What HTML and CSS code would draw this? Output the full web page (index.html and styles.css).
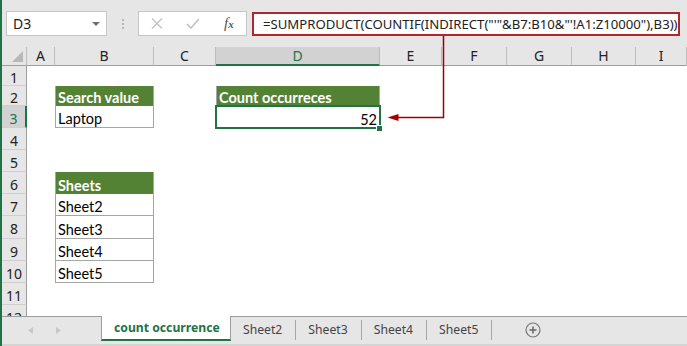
FILE: index.html
```html
<!DOCTYPE html>
<html>
<head>
<meta charset="utf-8">
<link rel="stylesheet" href="styles.css">
</head>
<body>
<div class="app">
  <div class="topbar">
    <div class="namebox"><span>D3</span><svg class="dd" width="8" height="4" viewBox="0 0 8 4"><path d="M0 0H8L4 4Z" fill="#707070"/></svg></div>
    <div class="grip"><i></i><i></i><i></i></div>
    <div class="fxbtns">
      <svg class="ico-x" width="12" height="11" viewBox="0 0 12 11"><path d="M1 0.5L11 10.5M11 0.5L1 10.5" stroke="#c2c2c2" stroke-width="1.4" fill="none"/></svg>
      <svg class="ico-ok" width="14" height="11" viewBox="0 0 14 11"><path d="M1 6L5 10L13 1" stroke="#c2c2c2" stroke-width="1.6" fill="none"/></svg>
      <span class="fx">f<span class="fxx">x</span></span>
    </div>
    <div class="formula">=SUMPRODUCT(COUNTIF(INDIRECT("'"&amp;B7:B10&amp;"'!A1:Z10000"),B3))</div>
  </div>

  <div class="sheet">
    <div class="grid">
      <div class="corner"><span class="tri"></span></div>
      <div class="ch">A</div><div class="ch">B</div><div class="ch">C</div><div class="ch cur">D</div><div class="ch">E</div><div class="ch">F</div><div class="ch">G</div><div class="ch">H</div><div class="ch">I</div>

      <div class="rh">1</div><div></div><div></div><div></div><div></div><div></div><div></div><div></div><div></div><div></div>

      <div class="rh">2</div><div></div><div class="hdr">Search value</div><div></div><div class="hdr">Count occurreces</div><div></div><div></div><div></div><div></div><div></div>

      <div class="rh cur">3</div><div></div><div class="bx">Laptop</div><div></div><div class="sel">52<span class="handle"></span></div><div></div><div></div><div></div><div></div><div></div>

      <div class="rh">4</div><div></div><div></div><div></div><div></div><div></div><div></div><div></div><div></div><div></div>

      <div class="rh">5</div><div></div><div></div><div></div><div></div><div></div><div></div><div></div><div></div><div></div>

      <div class="rh">6</div><div></div><div class="hdr">Sheets</div><div></div><div></div><div></div><div></div><div></div><div></div><div></div>

      <div class="rh">7</div><div></div><div class="bx">Sheet2</div><div></div><div></div><div></div><div></div><div></div><div></div><div></div>

      <div class="rh">8</div><div></div><div class="bx">Sheet3</div><div></div><div></div><div></div><div></div><div></div><div></div><div></div>

      <div class="rh">9</div><div></div><div class="bx">Sheet4</div><div></div><div></div><div></div><div></div><div></div><div></div><div></div>

      <div class="rh">10</div><div></div><div class="bx">Sheet5</div><div></div><div></div><div></div><div></div><div></div><div></div><div></div>

      <div class="rh">11</div><div></div><div></div><div></div><div></div><div></div><div></div><div></div><div></div><div></div>

      <div class="rh">12</div><div></div><div></div><div></div><div></div><div></div><div></div><div></div><div></div><div></div>
    </div>
  </div>

  <div class="tabs">
    <div class="nav">
      <svg width="5" height="7" viewBox="0 0 5 7"><path d="M5 0V7L0 3.5Z" fill="#c8c8c8"/></svg>
      <svg width="5" height="7" viewBox="0 0 5 7"><path d="M0 0V7L5 3.5Z" fill="#c8c8c8"/></svg>
    </div>
    <div class="tab active">count occurrence</div>
    <div class="tab">Sheet2</div>
    <div class="tab">Sheet3</div>
    <div class="tab">Sheet4</div>
    <div class="tab">Sheet5</div>
    <div class="add"><svg width="16" height="16" viewBox="0 0 16 16"><circle cx="8" cy="8" r="7" fill="none" stroke="#777" stroke-width="1.2"/><path d="M8 4.5V11.5M4.5 8H11.5" stroke="#666" stroke-width="1.5"/></svg></div>
  </div>

  <svg class="arrow" width="687" height="346" viewBox="0 0 687 346">
    <path d="M443.5 36V117.5H397" fill="none" stroke="#a00000" stroke-width="1.5"/>
    <path d="M387.5 117.5L398.5 114V121Z" fill="#a00000"/>
  </svg>
</div>
</body>
</html>
```

FILE: styles.css
```css
html, body {
  margin: 0;
  padding: 0;
  background: #ffffff;
}

.app {
  position: relative;
  width: 687px;
  height: 346px;
  box-sizing: border-box;
  border-left: 2px solid #217346;
  display: flex;
  flex-direction: column;
  overflow: hidden;
  font-family: "Noto Sans", "DejaVu Sans", sans-serif;
  color: #333;
}

/* ---------- formula bar ---------- */
.topbar {
  height: 47px;
  flex: none;
  box-sizing: border-box;
  padding: 11px 0 0 4px;
  background: #e6e6e6;
  display: flex;
  align-items: flex-start;
}

.namebox {
  width: 101px;
  height: 25px;
  box-sizing: border-box;
  border: 1px solid #c6c6c6;
  background: #fff;
  display: flex;
  align-items: center;
  justify-content: space-between;
  padding: 0 6px 0 6px;
  font-size: 14px;
  color: #222;
}

.grip {
  width: 31px;
  display: flex;
  flex-direction: column;
  align-items: center;
  gap: 2px;
  padding-top: 8px;
}

.grip i {
  display: block;
  width: 2px;
  height: 2px;
  background: #b4b4b4;
}

.fxbtns {
  width: 109px;
  height: 25px;
  box-sizing: border-box;
  border: 1px solid #c6c6c6;
  background: #fff;
  display: flex;
  align-items: center;
  padding-left: 12px;
  margin-right: 5px;
}

.ico-x { margin-right: 23px; }
.ico-ok { margin-right: 24px; }

.fx {
  font-family: "Liberation Serif", serif;
  font-style: italic;
  font-size: 15px;
  color: #555;
}

.fxx {
  font-size: 11px;
  font-weight: bold;
}

.formula {
  width: 428px;
  height: 24px;
  margin-top: 1px;
  box-sizing: border-box;
  border: 2px solid #b0282c;
  background: #fff;
  padding-left: 9px;
  font-size: 13.15px;
  line-height: 20px;
  color: #222;
  white-space: nowrap;
  overflow: hidden;
}

/* ---------- sheet ---------- */
.sheet {
  flex: 1;
  overflow: hidden;
  background: #fff;
}

.grid {
  display: grid;
  grid-template-columns: 25px 28px 99px 62px 164px 62px 65px 65px 64px 1fr;
  grid-template-rows: 19px 20px 20px 22px 22px 22px 22px 22px 23px 22px 22px 22px 22px;
}

.corner {
  background: #e6e6e6;
  border-right: 1px solid #bcbcbc;
  border-bottom: 1px solid #9e9e9e;
  box-sizing: border-box;
  position: relative;
}

.corner .tri {
  position: absolute;
  right: 3px;
  bottom: 3px;
  width: 0;
  height: 0;
  border-left: 11px solid transparent;
  border-bottom: 11px solid #b8b8b8;
}

.ch {
  background: #e6e6e6;
  border-right: 1px solid #bcbcbc;
  border-bottom: 1px solid #9e9e9e;
  box-sizing: border-box;
  text-align: center;
  font-size: 14px;
  line-height: 18px;
  color: #222;
}

.ch.cur {
  background: #d2d2d2;
  color: #217346;
  border-bottom: 2px solid #217346;
}

.rh {
  background: #e6e6e6;
  border-right: 1px solid #9e9e9e;
  border-bottom: 1px solid #cfcfcf;
  box-sizing: border-box;
  text-align: center;
  font-size: 14px;
  display: flex;
  align-items: center;
  justify-content: center;
  padding-top: 3px;
  color: #222;
}

.rh.cur {
  background: #d2d2d2;
  color: #217346;
  border-right: 2px solid #217346;
}

.hdr, .bx, .sel {
  font-family: Lato, "Liberation Sans", sans-serif;
  font-size: 14.5px;
  box-sizing: border-box;
  display: flex;
  align-items: flex-end;
  padding: 0 2px 0 2px;
  white-space: nowrap;
}

.hdr {
  background: #548235;
  color: #fff;
  font-weight: bold;
  border-left: 1px solid #a6a6a6;
  border-right: 1px solid #a6a6a6;
}

.bx {
  border-left: 1px solid #a6a6a6;
  border-right: 1px solid #a6a6a6;
  border-bottom: 1px solid #a6a6a6;
  color: #000;
}

.sel {
  position: relative;
  justify-content: flex-end;
  padding-right: 3px;
  color: #000;
  outline: 2px solid #217346;
  outline-offset: -1px;
}

.handle {
  position: absolute;
  right: -3px;
  bottom: -4px;
  width: 5px;
  height: 5px;
  background: #217346;
  border: 1px solid #fff;
}

/* ---------- tabs ---------- */
.tabs {
  height: 30px;
  flex: none;
  box-sizing: border-box;
  background: #e6e6e6;
  border-top: 1px solid #9e9e9e;
  border-bottom: 2px solid #d4d4d4;
  display: flex;
  align-items: flex-start;
  font-size: 12.2px;
}

.nav {
  width: 99px;
  height: 26px;
  display: flex;
  align-items: center;
  padding-left: 26px;
  gap: 23px;
  box-sizing: border-box;
}

.tab {
  height: 20px;
  margin-top: 3px;
  line-height: 20px;
  padding: 0 13px 0 12px;
  border-right: 1px solid #a6a6a6;
  color: #444;
  white-space: nowrap;
}

.tab.active {
  height: 25px;
  margin-top: -1px;
  line-height: 24px;
  padding: 0 12px;
  width: 130px;
  box-sizing: border-box;
  text-align: center;
  background: #fff;
  border-left: 1px solid #9e9e9e;
  border-right: 1px solid #9e9e9e;
  border-bottom: 2px solid #217346;
  color: #217346;
  font-weight: bold;
}

.add {
  margin: 5px 0 0 33px;
  height: 16px;
}

.add svg { display: block; }

.arrow {
  position: absolute;
  left: -2px;
  top: 0;
  pointer-events: none;
}
```
